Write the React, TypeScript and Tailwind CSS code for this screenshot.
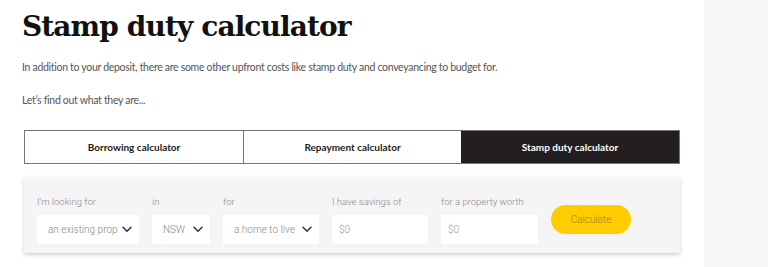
import React from 'react';

const tabs = ['Borrowing calculator', 'Repayment calculator', 'Stamp duty calculator'];

const Chevron = () => (
  <svg width="10" height="7" viewBox="0 0 10 7" fill="none" className="shrink-0">
    <path d="M1 1.2 L5 5.2 L9 1.2" stroke="#333" strokeWidth="1.5" strokeLinecap="round" strokeLinejoin="round" />
  </svg>
);

const SelectBox = ({ label, value, width }: { label: string; value: string; width: string }) => (
  <div className={`flex flex-col gap-[7px] ${width}`}>
    <span className="text-[9.5px] text-[#8a8a8a] leading-[12px]">{label}</span>
    <div className="h-[29px] bg-white flex items-center pl-[11px] pr-[7px] gap-[4px]">
      <span className="flex-1 overflow-hidden whitespace-nowrap text-[10px] text-[#888]">{value}</span>
      <Chevron />
    </div>
  </div>
);

const InputBox = ({ label, width }: { label: string; width: string }) => (
  <div className={`flex flex-col gap-[7px] ${width}`}>
    <span className="text-[9.5px] text-[#8a8a8a] leading-[12px]">{label}</span>
    <div className="h-[29px] bg-white flex items-center px-[7px]">
      <span className="text-[10px] text-[#999]">$0</span>
    </div>
  </div>
);

export default function App() {
  return (
    <div className="w-[768px] h-[267px] flex bg-white overflow-hidden">
      <div className="w-[704px] pl-[22px] pr-[24px]">
        <h1 className="pt-[8px] text-[28px] leading-[38px] font-bold text-[#111] tracking-[-0.9px]" style={{ fontFamily: '"DejaVu Serif", serif' }}>
          Stamp duty calculator
        </h1>
        <div className="font-['Lato',sans-serif] text-[10.5px] tracking-[-0.3px] text-[#555]">
          <p className="mt-[14px] leading-[14px]">In addition to your deposit, there are some other upfront costs like stamp duty and conveyancing to budget for.</p>
          <p className="mt-[19px] leading-[14px]">Let’s find out what they are...</p>
        </div>
        <div className="ml-[2px] mt-[23px] grid grid-cols-3 h-[34px] border border-[#777] font-['Lato',sans-serif]">
          {tabs.map((t, i) => (
            <div
              key={t}
              className={`flex items-center justify-center text-[10px] font-bold ${i === 2 ? 'bg-[#231f20] text-white' : 'text-[#222]'} ${i === 1 ? 'border-l border-[#777]' : ''}`}
            >
              {t}
            </div>
          ))}
        </div>
        <div className="ml-[2px] mt-[13px] h-[76px] bg-[#f5f5f5] shadow-[0_2px_4px_rgba(0,0,0,0.18)] flex items-start gap-[13px] pl-[13px] pt-[19px] font-['Roboto',sans-serif] font-light">
          <SelectBox label="I’m looking for" value="an existing property" width="w-[102px]" />
          <SelectBox label="in" value="NSW" width="w-[58px]" />
          <SelectBox label="for" value="a home to live in" width="w-[96px]" />
          <InputBox label="I have savings of" width="w-[96px]" />
          <InputBox label="for a property worth" width="w-[97px]" />
          <button className="mt-[9px] w-[80px] h-[29px] rounded-full bg-[#ffcc00] text-[10px] text-[#9a8535]">Calculate</button>
        </div>
      </div>
      <div className="flex-1 bg-[#f6f6f6]" />
    </div>
  );
}
